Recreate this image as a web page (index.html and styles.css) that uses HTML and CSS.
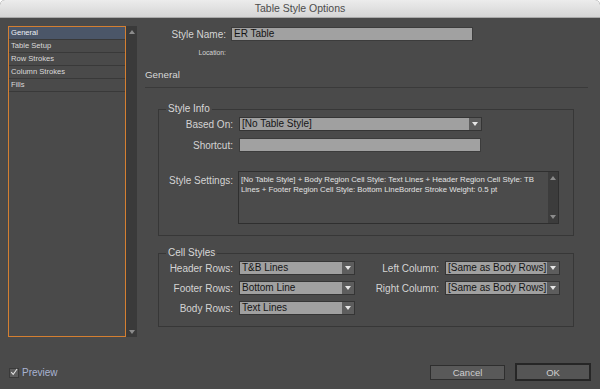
FILE: index.html
```html
<!DOCTYPE html>
<html lang="en">
<head>
    <meta charset="UTF-8">
    <title>Table Style Options</title>
    <link rel="stylesheet" href="styles.css">
</head>
<body>
<div class="window">
    <div class="titlebar">Table Style Options</div>

    <div class="main">
        <div class="sidebar">
            <ul class="list">
                <li class="selected">General</li>
                <li>Table Setup</li>
                <li>Row Strokes</li>
                <li>Column Strokes</li>
                <li>Fills</li>
            </ul>
            <div class="scroll">
                <span class="arrow-up"></span>
                <span class="arrow-down"></span>
            </div>
        </div>

        <div class="content">
            <div class="name-row">
                <label class="label">Style Name:</label>
                <div class="input name-input">ER Table</div>
            </div>
            <div class="location-row">
                <label class="label small">Location:</label>
            </div>

            <h2 class="section">General</h2>

            <fieldset class="group info">
                <legend>Style Info</legend>
                <div class="row">
                    <label class="label">Based On:</label>
                    <div class="select wide">
                        <div class="value">[No Table Style]</div>
                        <div class="drop"><span></span></div>
                    </div>
                </div>
                <div class="row">
                    <label class="label">Shortcut:</label>
                    <div class="input shortcut"></div>
                </div>
                <div class="row settings">
                    <label class="label">Style Settings:</label>
                    <div class="textarea">
                        <p>[No Table Style] + Body Region Cell Style: Text Lines + Header Region Cell Style: TB Lines + Footer Region Cell Style: Bottom LineBorder Stroke Weight: 0.5 pt</p>
                        <div class="tscroll">
                            <span class="arrow-up"></span>
                            <span class="arrow-down"></span>
                        </div>
                    </div>
                </div>
            </fieldset>

            <fieldset class="group cells">
                <legend>Cell Styles</legend>
                <div class="cell-grid">
                    <label class="label">Header Rows:</label>
                    <div class="select">
                        <div class="value">T&amp;B Lines</div>
                        <div class="drop"><span></span></div>
                    </div>
                    <label class="label">Left Column:</label>
                    <div class="select">
                        <div class="value">[Same as Body Rows]</div>
                        <div class="drop"><span></span></div>
                    </div>

                    <label class="label">Footer Rows:</label>
                    <div class="select">
                        <div class="value">Bottom Line</div>
                        <div class="drop"><span></span></div>
                    </div>
                    <label class="label">Right Column:</label>
                    <div class="select">
                        <div class="value">[Same as Body Rows]</div>
                        <div class="drop"><span></span></div>
                    </div>

                    <label class="label">Body Rows:</label>
                    <div class="select">
                        <div class="value">Text Lines</div>
                        <div class="drop"><span></span></div>
                    </div>
                </div>
            </fieldset>
        </div>
    </div>

    <div class="footer">
        <label class="preview">
            <span class="checkbox">
                <svg width="10" height="10" viewBox="0 0 10 10"><path d="M1.5 5.2 L4 8 L8.8 1.2" fill="none" stroke="#e2e2e2" stroke-width="1.3"/></svg>
            </span>
            Preview
        </label>
        <div class="buttons">
            <button class="btn">Cancel</button>
            <button class="btn ok">OK</button>
        </div>
    </div>
</div>
</body>
</html>
```

FILE: styles.css
```css
* {
    box-sizing: border-box;
}

body {
    margin: 0;
    background: #ffffff;
    font-family: "Liberation Sans", Arial, sans-serif;
}

.window {
    width: 600px;
    height: 389px;
    background: #4a4a4a;
    display: flex;
    flex-direction: column;
    overflow: hidden;
    border-radius: 5px 5px 0 0;
}

.titlebar {
    height: 18px;
    background: linear-gradient(#ececec, #d5d5d5);
    border-bottom: 1px solid #a9a9a9;
    color: #4c4c4c;
    font-size: 10.5px;
    line-height: 17px;
    text-align: center;
}

.main {
    display: flex;
    gap: 8px;
    padding: 8px 12px 0 8px;
    height: 319px;
}

/* left list */
.sidebar {
    display: flex;
    width: 129px;
    height: 311px;
}

.list {
    list-style: none;
    margin: 0;
    padding: 0;
    width: 118px;
    border: 1px solid #d47f31;
    background: #4a4a4a;
}

.list li {
    height: 13px;
    line-height: 12px;
    padding-left: 2px;
    font-size: 7.6px;
    color: #dadada;
    border-bottom: 1px solid #393939;
}

.list li.selected {
    background: #4b5668;
    color: #eef0f4;
}

.scroll {
    width: 11px;
    background: #3a3a3a;
    display: flex;
    flex-direction: column;
    justify-content: space-between;
    align-items: center;
    padding: 4px 0 3px;
}

.arrow-up, .arrow-down {
    width: 0;
    height: 0;
    border-left: 3px solid transparent;
    border-right: 3px solid transparent;
}

.arrow-up {
    border-bottom: 4px solid #8c8c8c;
}

.arrow-down {
    border-top: 4px solid #8c8c8c;
}

/* right side */
.content {
    width: 443px;
    color: #d6d6d6;
}

.label {
    font-size: 10px;
    color: #d4d4d4;
    text-align: right;
}

.label.small {
    font-size: 6.8px;
}

.name-row {
    display: flex;
    align-items: center;
    gap: 5px;
    margin-top: 1px;
    height: 14px;
}

.name-row .label,
.location-row .label {
    width: 81px;
}

.input {
    height: 14px;
    background: #a1a1a1;
    border: 1px solid #3c3c3c;
    color: #141414;
    font-size: 10px;
    line-height: 12px;
    padding-left: 2px;
}

.name-input {
    width: 242px;
}

.location-row {
    display: flex;
    margin-top: 7px;
    height: 9px;
    line-height: 9px;
}

.section {
    margin: 12px 0 0;
    padding-bottom: 7px;
    font-size: 9.8px;
    font-weight: normal;
    color: #d8d8d8;
    border-bottom: 1px solid #3a3a3a;
}

/* group boxes */
.group {
    margin: 0 14px 0 13px;
    border: 1px solid #373737;
    padding: 2px 0 11px 0;
}

.group legend {
    font-size: 10px;
    color: #d8d8d8;
    padding: 0 2px;
    margin-left: 7px;
    line-height: 12px;
}

.info {
    margin-top: 15px;
}

.cells {
    margin-top: 11px;
}

.row {
    display: flex;
    align-items: center;
    gap: 6px;
    height: 14px;
    margin-bottom: 7px;
}

.row .label {
    width: 74px;
}

.select {
    display: flex;
    height: 14px;
    border: 1px solid #353535;
}

.select .value {
    flex: 1;
    background: #a0a0a0;
    color: #151515;
    font-size: 10px;
    line-height: 12px;
    padding-left: 2px;
    white-space: nowrap;
    overflow: hidden;
}

.select .drop {
    width: 12px;
    background: #5d5d5d;
    display: flex;
    align-items: center;
    justify-content: center;
}

.select .drop span {
    width: 0;
    height: 0;
    border-left: 3px solid transparent;
    border-right: 3px solid transparent;
    border-top: 4px solid #e6e6e6;
}

.select.wide {
    width: 243px;
}

.shortcut {
    width: 242px;
}

.settings {
    height: 53px;
    align-items: flex-start;
    margin-top: 19px;
    margin-bottom: 0;
}

.settings .label {
    padding-top: 4px;
}

.textarea {
    display: flex;
    width: 321px;
    height: 53px;
    margin-left: -1px;
    border: 1px solid #2f2f2f;
    background: #4b4b4b;
}

.textarea p {
    flex: 1;
    margin: 0;
    padding: 3px 2px;
    font-size: 7.8px;
    line-height: 9.5px;
    color: #e2e2e2;
}

.tscroll {
    width: 10px;
    background: #3c3c3c;
    display: flex;
    flex-direction: column;
    justify-content: space-between;
    align-items: center;
    padding: 4px 0 4px;
}

.cell-grid {
    display: grid;
    grid-template-columns: 74px 116px 78px 115px;
    grid-auto-rows: 14px;
    column-gap: 6px;
    row-gap: 6px;
    align-items: center;
}

/* footer */
.footer {
    flex: 1;
    display: flex;
    justify-content: space-between;
    align-items: flex-end;
    padding: 0 9px 8px 9px;
}

.preview {
    display: flex;
    align-items: center;
    gap: 3px;
    font-size: 10px;
    color: #a9b3d1;
    margin-bottom: 3px;
}

.checkbox {
    width: 10px;
    height: 10px;
    background: #5d5d5d;
    border: 1px solid #3a3a3a;
    display: flex;
    align-items: center;
    justify-content: center;
}

.checkbox svg {
    margin-top: -2px;
}

.buttons {
    display: flex;
    align-items: center;
    gap: 10px;
}

.btn {
    width: 75px;
    height: 15px;
    background: #595959;
    border: 1px solid #2e2e2e;
    color: #cfcfcf;
    font-family: "Liberation Sans", Arial, sans-serif;
    font-size: 9.5px;
    padding: 0;
}

.btn.ok {
    width: 76px;
    height: 18px;
    background: #555555;
    border: 2px solid #262626;
}
```
